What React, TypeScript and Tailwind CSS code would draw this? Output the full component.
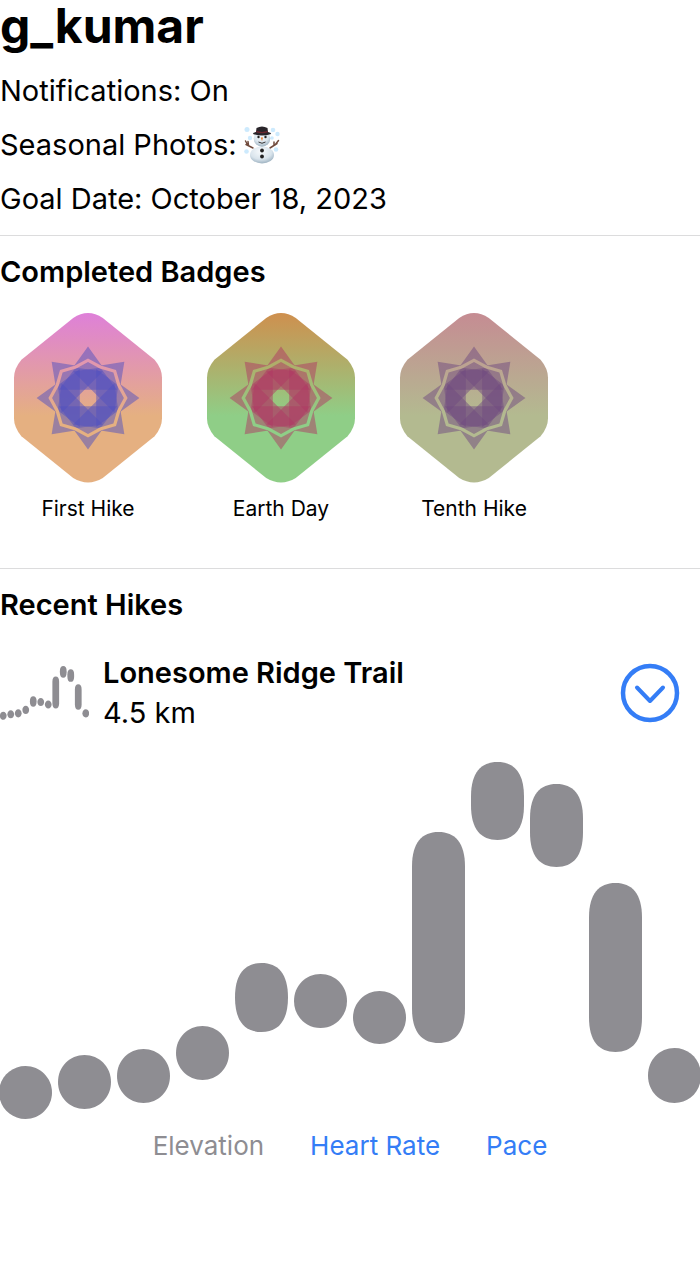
import { useId, useState } from 'react';

type BadgeTheme = {
  name: string;
  from: string;
  to: string;
  symbol: string;
};

type Range = {
  top: number;
  bottom: number;
};

const badges: BadgeTheme[] = [
  { name: 'First Hike', from: '#de7edc', to: '#e5b081', symbol: '#4f4fbf' },
  { name: 'Earth Day', from: '#d18d4c', to: '#8fce87', symbol: '#b03763' },
  { name: 'Tenth Hike', from: '#c68a93', to: '#b3ba90', symbol: '#704a7f' },
];

const metrics = ['Elevation', 'Heart Rate', 'Pace'];

const elevation: Range[] = [
  { top: 304, bottom: 357 },
  { top: 293, bottom: 347 },
  { top: 287, bottom: 341 },
  { top: 264, bottom: 318 },
  { top: 201, bottom: 270 },
  { top: 212, bottom: 266 },
  { top: 229, bottom: 282 },
  { top: 70, bottom: 281 },
  { top: 0, bottom: 78 },
  { top: 22, bottom: 105 },
  { top: 121, bottom: 290 },
  { top: 286, bottom: 341 },
];

const BAR_WIDTH = 53;
const BAR_PITCH = 59;

// Capsule with continuous corners: taller bars ease into their straight sides
function barPath(x: number, { top, bottom }: Range) {
  const r = BAR_WIDTH / 2;
  const ease = Math.min((bottom - top) / 2, r * 1.3);
  const cy = r * 0.448 - (ease - r) * 0.16;
  const cx = r * 0.448 - (ease - r) * 0.23;
  const right = x + BAR_WIDTH;
  return [
    `M${x} ${top + ease}`,
    `C${x} ${top + cy} ${x + cx} ${top} ${x + r} ${top}`,
    `C${right - cx} ${top} ${right} ${top + cy} ${right} ${top + ease}`,
    `V${bottom - ease}`,
    `C${right} ${bottom - cy} ${right - cx} ${bottom} ${x + r} ${bottom}`,
    `C${x + cx} ${bottom} ${x} ${bottom - cy} ${x} ${bottom - ease}Z`,
  ].join('');
}

function HikeGraph({ className }: { className: string }) {
  return (
    <svg viewBox="0 0 700 358" preserveAspectRatio="none" className={className} aria-hidden="true">
      {elevation.map((range, index) => (
        <path key={index} d={barPath(index * BAR_PITCH - 1, range)} fill="#8e8d92" />
      ))}
    </svg>
  );
}

function Badge({ name, from, to, symbol }: BadgeTheme) {
  const id = useId();

  return (
    <li className="flex w-44 flex-col items-center gap-[7px]">
      <svg viewBox="0 0 176 180" className="w-full" aria-hidden="true">
        <defs>
          <linearGradient id={id} gradientUnits="userSpaceOnUse" x1="0" y1="1" x2="0" y2="108">
            <stop offset="0" stopColor={from} />
            <stop offset="1" stopColor={to} />
          </linearGradient>
        </defs>
        <path
          fill={`url(#${id})`}
          d="M154.6 51.7L102.8 9.9Q88 0 73.2 9.9L21.4 51.7Q14 60.6 14 69.5V110.5Q14 119.4 21.4 128.3L73.2 170.1Q88 179 102.8 170.1L154.6 128.3Q162 119.4 162 110.5V69.5Q162 60.6 154.6 51.7Z"
        />
        <g transform="translate(88 90)" fill={symbol}>
          {[0, 45, 90, 135, 180, 225, 270, 315].map((angle) => (
            <path
              key={angle}
              transform={`rotate(${angle})`}
              opacity="0.5"
              d="M0-51.4L-14-32L0-39.6L14-32ZM0-35.9L-14-28.3L-29.1-8.2H29.1L14-28.3Z"
            />
          ))}
        </g>
      </svg>
      <span className="text-[21px] leading-7">{name}</span>
    </li>
  );
}

function Snowman() {
  return (
    <svg viewBox="0 0 36 38" className="h-[38px] w-9" role="img" aria-label="Winter">
      <defs>
        <radialGradient id="snow" cx="0.45" cy="0.3" r="0.75">
          <stop offset="0" stopColor="#f7fafc" />
          <stop offset="0.6" stopColor="#d9e4ec" />
          <stop offset="1" stopColor="#92a8b8" />
        </radialGradient>
      </defs>
      <g fill="#cdeafd">
        <circle cx="3" cy="3.5" r="2.5" />
        <circle cx="6" cy="12" r="2.2" />
        <circle cx="29" cy="4" r="2.3" />
        <circle cx="33.5" cy="8" r="2.2" />
        <circle cx="28" cy="12" r="1.8" />
        <circle cx="2.5" cy="25.5" r="2.3" />
        <circle cx="32" cy="23.5" r="2.3" />
      </g>
      <g stroke="#704b3d" strokeWidth="1.5" strokeLinecap="round" fill="none">
        <path d="M9 22L2 18.5M4 19.5L1.5 15M4.5 19.5L4 15.5" />
        <path d="M26 22L33 17.5M31 19L34.5 14.5M30 19.5L30 16" />
      </g>
      <ellipse cx="18" cy="29" rx="12" ry="8.5" fill="url(#snow)" />
      <circle cx="18" cy="12.5" r="8.3" fill="url(#snow)" />
      <path d="M12.5 2Q18-1 23.5 2L24 6Q27.5 6.5 27 8Q18 11 9 8Q8.5 6.5 12 6Z" fill="#29252a" />
      <path d="M12.2 4.8Q18 7 23.8 4.8V6.2Q18 8.5 12.2 6.2Z" fill="#6b2730" />
      <circle cx="14.5" cy="11" r="1.2" fill="#222" />
      <circle cx="21.5" cy="11" r="1.2" fill="#222" />
      <path d="M16.8 11.5H19L18 15Z" fill="#ee7623" />
      <path d="M14.5 16Q18 18.5 21.5 16" fill="none" stroke="#333" strokeWidth="1" />
      <circle cx="18" cy="24.5" r="1.9" fill="#222" />
      <circle cx="18" cy="30.5" r="1.9" fill="#222" />
    </svg>
  );
}

export default function App() {
  const [metric, setMetric] = useState('Elevation');
  const [expanded, setExpanded] = useState(true);

  return (
    <main className="min-h-screen bg-white font-[Inter,sans-serif] text-[29px] leading-10 text-black">
      <section className="border-b border-[#dcdcdd] pb-4">
        <h1 className="text-[48px] leading-[52px] font-bold">g_kumar</h1>
        <div className="flex flex-col gap-[14px] pt-[19px]">
          <p>Notifications: On</p>
          <p className="flex items-center gap-[7px]">
            Seasonal Photos: <Snowman />
          </p>
          <p>Goal Date: October 18, 2023</p>
        </div>
      </section>

      <section className="border-b border-[#dcdcdd] pt-4 pb-[45px]">
        <h2 className="font-semibold">Completed Badges</h2>
        <ul className="flex gap-[17px] overflow-x-auto pt-4">
          {badges.map((badge) => (
            <Badge key={badge.name} {...badge} />
          ))}
        </ul>
      </section>

      <section className="pt-4">
        <h2 className="font-semibold">Recent Hikes</h2>
        <div className="flex items-center pt-7 pr-5">
          <HikeGraph className="h-[54px] w-[89px] shrink-0" />
          <div className="grow pl-[14px]">
            <h3 className="font-semibold">Lonesome Ridge Trail</h3>
            <p>4.5 km</p>
          </div>
          <button
            type="button"
            aria-label="Toggle hike details"
            aria-expanded={expanded}
            onClick={() => setExpanded(!expanded)}
            className="shrink-0 text-[#347df6]"
          >
            <svg viewBox="0 0 60 60" className="size-[60px]" fill="none" stroke="currentColor" aria-hidden="true">
              <circle cx="30" cy="30" r="27" strokeWidth="4.5" />
              <path d="M17 24.5L30 38L43 24.5" strokeWidth="4" strokeLinecap="round" strokeLinejoin="round" />
            </svg>
          </button>
        </div>

        {expanded && (
          <div className="pt-[29px]">
            <HikeGraph className="aspect-[700/358] w-full" />
            <div className="flex justify-center gap-[46px] pt-[6px] text-[26px]">
              {metrics.map((item) => (
                <button
                  key={item}
                  type="button"
                  aria-pressed={item === metric}
                  onClick={() => setMetric(item)}
                  className={item === metric ? 'text-[#8e8d92]' : 'text-[#347df6]'}
                >
                  {item}
                </button>
              ))}
            </div>
          </div>
        )}
      </section>
    </main>
  );
}
